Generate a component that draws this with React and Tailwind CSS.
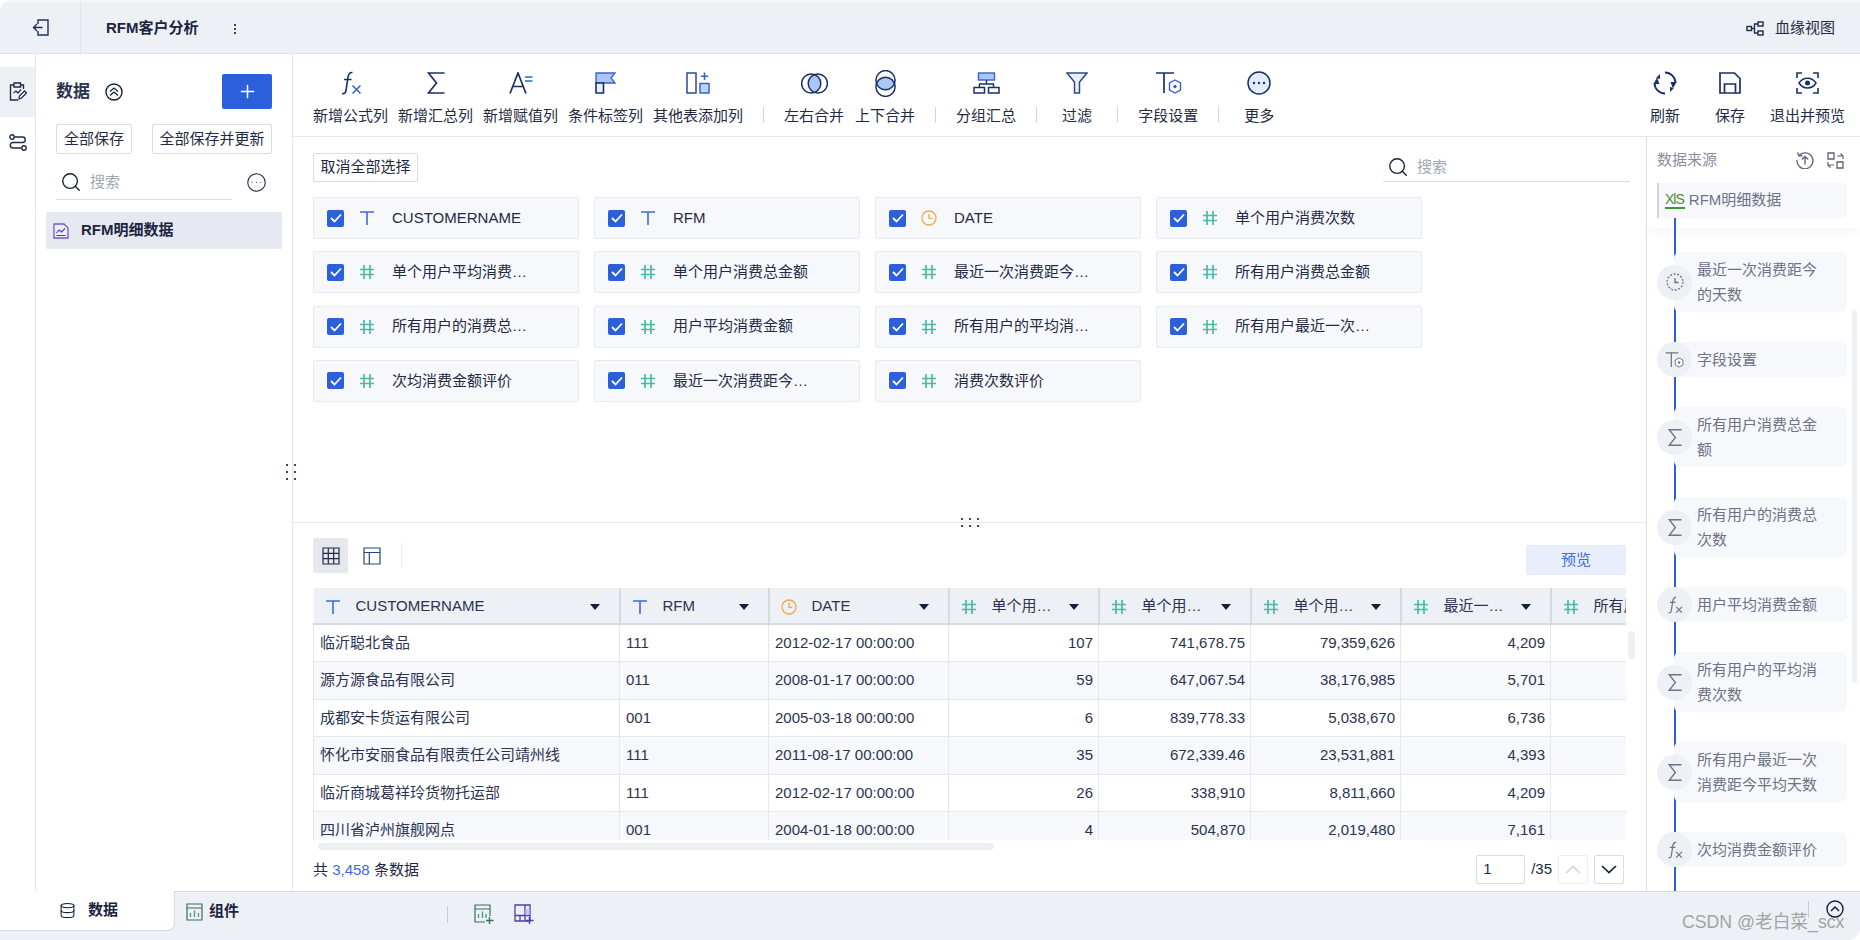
import React from "react";
import { Search, CircleEllipsis, Plus, Database } from "lucide-react";

const NAVY = "#1b3068";
const LB = "#a9c6f5";
const BL = "#3a63c8";

const Svg = ({ w, h, vb, children, className = "" }) => (
  <svg width={w} height={h} viewBox={vb} fill="none" className={"shrink-0 " + className}>{children}</svg>
);

const FxIcon = ({ c = NAVY, x = BL, w = 22, h = 24 }) => (
  <Svg w={w} h={h} vb="0 0 22 24">
    <path d="M12.5 1.5C9.5 1 8.6 2.6 8 6L6 19.5C5.5 22.2 4.4 23 2 22.5M4 8.5H11.5" stroke={c} strokeWidth="1.6" />
    <path d="M12.5 14.5L20.5 22.5M20.5 14.5L12.5 22.5" stroke={x} strokeWidth="1.6" />
  </Svg>
);
const SigmaIcon = ({ c = NAVY, w = 18, h = 22 }) => (
  <Svg w={w} h={h} vb="0 0 18 22">
    <path d="M17.5 1H1.5L9.5 11L1.5 21H17.5" stroke={c} strokeWidth="1.7" />
  </Svg>
);
const AssignIcon = () => (
  <Svg w={24} h={22} vb="0 0 24 22">
    <path d="M1 21.5L9 1L17 21.5M3.8 14.5H14.2" stroke={NAVY} strokeWidth="1.7" />
    <path d="M16 5H23.5M16 9H23.5" stroke={BL} strokeWidth="1.6" />
  </Svg>
);
const FlagIcon = () => (
  <Svg w={21} h={22} vb="0 0 21 22">
    <path d="M1 1H20L16 6L20 11H1Z" fill={LB} stroke={BL} strokeWidth="1.3" />
    <path d="M1 11H8.5V21H1Z" fill="#e9f0fc" stroke={NAVY} strokeWidth="1.6" />
  </Svg>
);
const OtherIcon = () => (
  <Svg w={24} h={22} vb="0 0 24 22">
    <rect x="1" y="1" width="9" height="20" stroke="#2c4a9a" strokeWidth="1.5" />
    <rect x="14" y="11.5" width="9" height="9.5" fill="#bcd3f7" stroke={BL} strokeWidth="1.5" />
    <path d="M18.5 0.5V8M14.8 4.3H22.2" stroke={BL} strokeWidth="1.6" />
  </Svg>
);
const VennH = () => (
  <Svg w={27} h={21} vb="0 0 27 21">
    <path d="M13.5 1.5A9.8 9.8 0 0 1 13.5 19.5A9.8 9.8 0 0 1 13.5 1.5" fill={LB} />
    <circle cx="10.2" cy="10.5" r="9.6" stroke={NAVY} strokeWidth="1.5" />
    <circle cx="16.8" cy="10.5" r="9.6" stroke={NAVY} strokeWidth="1.5" />
  </Svg>
);
const VennV = () => (
  <Svg w={21} h={27} vb="0 0 21 27">
    <path d="M1.5 13.5A9.8 9.8 0 0 1 19.5 13.5A9.8 9.8 0 0 1 1.5 13.5" fill={LB} />
    <circle cx="10.5" cy="10.2" r="9.6" stroke={NAVY} strokeWidth="1.5" />
    <circle cx="10.5" cy="16.8" r="9.6" stroke={NAVY} strokeWidth="1.5" />
  </Svg>
);
const OrgIcon = () => (
  <Svg w={27} h={22} vb="0 0 27 22">
    <rect x="5.5" y="1" width="16" height="7" fill={LB} stroke={BL} strokeWidth="1.4" />
    <path d="M13.5 8V12M6.5 15.5V12H20.5V15.5" stroke={NAVY} strokeWidth="1.4" />
    <rect x="1" y="15.5" width="10.5" height="5.5" fill="#fff" stroke={NAVY} strokeWidth="1.5" />
    <rect x="15.5" y="15.5" width="10.5" height="5.5" fill="#fff" stroke={NAVY} strokeWidth="1.5" />
  </Svg>
);
const FunnelIcon = () => (
  <Svg w={22} h={22} vb="0 0 22 22">
    <path d="M1 1H21L13.5 10V21H8.5V10Z" fill="#eaf0fb" stroke="#2c4a85" strokeWidth="1.5" />
  </Svg>
);
const THexIcon = ({ c = NAVY, h2 = BL, w = 27, h = 22 }) => (
  <Svg w={w} h={h} vb="0 0 27 22">
    <path d="M1 1H19M9 1V21" stroke={c} strokeWidth="1.7" />
    <path d="M20 8L25.5 11V18L20 21L14.5 18V11Z" fill="#fff" stroke={h2} strokeWidth="1.4" />
    <circle cx="20" cy="14.5" r="1.7" fill={h2} />
  </Svg>
);
const MoreIcon = () => (
  <Svg w={24} h={24} vb="0 0 24 24">
    <circle cx="12" cy="12" r="11" fill="#e3ecfb" stroke={NAVY} strokeWidth="1.5" />
    <circle cx="7" cy="12" r="1.2" fill={NAVY} /><circle cx="12" cy="12" r="1.2" fill={NAVY} /><circle cx="17" cy="12" r="1.2" fill={NAVY} />
  </Svg>
);
const RefreshIcon = () => (
  <Svg w={24} h={24} vb="0 0 24 24">
    <path d="M12 1.5A10.5 10.5 0 0 1 22.5 12" stroke={NAVY} strokeWidth="1.9" />
    <path d="M12 22.5A10.5 10.5 0 0 1 1.5 12" stroke={NAVY} strokeWidth="1.9" />
    <path d="M17.5 11H23.5L20 17.5Z M17 16V21L21 17Z" fill={NAVY} />
    <path d="M6.5 13H0.5L4 6.5Z M7 8V3L3 7Z" fill={NAVY} />
  </Svg>
);
const SaveIcon = () => (
  <Svg w={22} h={22} vb="0 0 22 22">
    <path d="M1 1H15.5L21 6.5V21H1Z" stroke={NAVY} strokeWidth="1.7" />
    <path d="M5.5 21V12H16.5V21" stroke={NAVY} strokeWidth="1.7" />
  </Svg>
);
const EyeScan = () => (
  <Svg w={23} h={22} vb="0 0 23 22">
    <path d="M1 6V1H6M17 1H22V6M1 16V21H6M17 21H22V16" stroke={NAVY} strokeWidth="1.6" />
    <path d="M3 11C7 4.5 16 4.5 20 11C16 17.5 7 17.5 3 11Z" stroke={NAVY} strokeWidth="1.5" />
    <circle cx="11.5" cy="11" r="2.5" fill={NAVY} />
  </Svg>
);
const BackIcon = () => (
  <Svg w={17} h={17} vb="0 0 17 17">
    <path d="M6 5V1H16V16H6V12" stroke={NAVY} strokeWidth="1.4" />
    <path d="M10.5 8.5H1.5M5 5L1.5 8.5L5 12" stroke={NAVY} strokeWidth="1.4" />
  </Svg>
);
const Lineage = () => (
  <Svg w={18} h={15} vb="0 0 18 15">
    <rect x="1" y="5.5" width="4.5" height="4" stroke="#1f2a44" strokeWidth="1.4" />
    <rect x="12" y="1" width="5" height="4" stroke="#1f2a44" strokeWidth="1.4" />
    <rect x="12" y="10" width="5" height="4" stroke="#1f2a44" strokeWidth="1.4" />
    <path d="M5.5 7.5H8.5M12 3H8.5V12H12" stroke="#1f2a44" strokeWidth="1.3" />
  </Svg>
);
const ClipEdit = () => (
  <Svg w={18} h={19} vb="0 0 18 19">
    <path d="M5 3H1.5V18H9M12 3H14.5V7" stroke="#1f2a44" strokeWidth="1.4" />
    <path d="M5 1H11.5V5H5Z" stroke="#1f2a44" strokeWidth="1.4" />
    <path d="M4.5 11L7 9L9 11L12 7.5" stroke="#1f2a44" strokeWidth="1.2" />
    <path d="M10 17L10.5 14L15.5 9L17.5 11L12.5 16Z" fill="#fff" stroke="#1f2a44" strokeWidth="1.3" />
  </Svg>
);
const RouteIcon = () => (
  <Svg w={18} h={17} vb="0 0 18 17">
    <circle cx="3" cy="3" r="2.2" stroke="#1f2a44" strokeWidth="1.4" />
    <circle cx="15" cy="14" r="2.2" stroke="#1f2a44" strokeWidth="1.4" />
    <path d="M5.5 3H13.5A2.7 2.7 0 0 1 13.5 8.5H4A2.7 2.7 0 0 0 4 14H12.5" stroke="#1f2a44" strokeWidth="1.4" />
  </Svg>
);
const ChevCircle = ({ double, s = 18 }) => (
  <Svg w={s} h={s} vb="0 0 18 18">
    <circle cx="9" cy="9" r="8" stroke="#14213d" strokeWidth="1.4" />
    {double ? <path d="M5 8.5L9 5L13 8.5M5 12.5L9 9L13 12.5" stroke="#14213d" strokeWidth="1.3" /> : <path d="M5 11L9 7L13 11" stroke="#14213d" strokeWidth="1.5" />}
  </Svg>
);
const ChartDoc = () => (
  <Svg w={16} h={16} vb="0 0 16 16">
    <path d="M1 1H11L15 5V15H1Z" fill="#f0eefb" stroke="#6a5acd" strokeWidth="1.3" />
    <path d="M3.5 10L6 7L8.5 9L12 5.5M3.5 12.5H12.5" stroke="#4b3fb0" strokeWidth="1.1" />
  </Svg>
);
const TIcon = () => (
  <Svg w={14} h={14} vb="0 0 14 14">
    <path d="M0 1H14M7 1V14" stroke="#3f6ae0" strokeWidth="1.6" />
  </Svg>
);
const HashIcon = () => (
  <Svg w={14} h={14} vb="0 0 14 14">
    <path d="M4 0V14M10 0V14M0 4.5H14M0 9.5H14" stroke="#4cb8a8" strokeWidth="1.7" />
  </Svg>
);
const ClockIcon = () => (
  <Svg w={16} h={16} vb="0 0 16 16">
    <circle cx="8" cy="8" r="7" stroke="#f0a94a" strokeWidth="1.3" />
    <path d="M8 3.8V8.3H11.5" stroke="#f0a94a" strokeWidth="1.3" />
  </Svg>
);
const Check = () => (
  <span className="w-[17px] h-[17px] shrink-0 rounded-[2px] bg-[#2c5fdc] flex items-center justify-center">
    <Svg w={12} h={10} vb="0 0 12 10"><path d="M1 5L4.5 8.5L11 1.5" stroke="#fff" strokeWidth="1.8" /></Svg>
  </span>
);
const TypeIcon = ({ t }) => (t === "T" ? <TIcon /> : t === "D" ? <ClockIcon /> : <HashIcon />);

const Tool = ({ label, icon, className = "" }) => (
  <div className={"flex flex-col items-center shrink-0 " + className}>
    <div className="h-[30px] flex items-center justify-center">{icon}</div>
    <div className="mt-[7px] text-[15px] leading-[22px] text-[#1f2a44] whitespace-nowrap">{label}</div>
  </div>
);
const Sep = () => <div className="w-px h-[15px] bg-[#cfd3dd] shrink-0 mx-[20px] mt-[39px]" />;

const fields = [
  ["T", "CUSTOMERNAME"], ["T", "RFM"], ["D", "DATE"], ["H", "单个用户消费次数"],
  ["H", "单个用户平均消费…"], ["H", "单个用户消费总金额"], ["H", "最近一次消费距今…"], ["H", "所有用户消费总金额"],
  ["H", "所有用户的消费总…"], ["H", "用户平均消费金额"], ["H", "所有用户的平均消…"], ["H", "所有用户最近一次…"],
  ["H", "次均消费金额评价"], ["H", "最近一次消费距今…"], ["H", "消费次数评价"],
];

const cols = [
  ["T", "CUSTOMERNAME", 306], ["T", "RFM", 149], ["D", "DATE", 180], ["H", "单个用…", 150],
  ["H", "单个用…", 152], ["H", "单个用…", 150], ["H", "最近一…", 150], ["H", "所有用…", 150],
];
const rows = [
  ["临沂聪北食品", "111", "2012-02-17 00:00:00", "107", "741,678.75", "79,359,626", "4,209"],
  ["源方源食品有限公司", "011", "2008-01-17 00:00:00", "59", "647,067.54", "38,176,985", "5,701"],
  ["成都安卡货运有限公司", "001", "2005-03-18 00:00:00", "6", "839,778.33", "5,038,670", "6,736"],
  ["怀化市安丽食品有限责任公司靖州线", "111", "2011-08-17 00:00:00", "35", "672,339.46", "23,531,881", "4,393"],
  ["临沂商城葛祥玲货物托运部", "111", "2012-02-17 00:00:00", "26", "338,910", "8,811,660", "4,209"],
  ["四川省泸州旗舰网点", "001", "2004-01-18 00:00:00", "4", "504,870", "2,019,480", "7,161"],
];

const G = "#6b7386";
const steps = [
  [<Svg w={18} h={18} vb="0 0 18 18"><circle cx="9" cy="9" r="8" stroke={G} strokeWidth="1.3" strokeDasharray="2 1.6" /><path d="M9 5V9.5H12.5" stroke={G} strokeWidth="1.3" /></Svg>, "最近一次消费距今的天数"],
  [<THexIcon c={G} h2={G} w={19} h={16} />, "字段设置"],
  [<SigmaIcon c={G} w={14} h={17} />, "所有用户消费总金额"],
  [<SigmaIcon c={G} w={14} h={17} />, "所有用户的消费总次数"],
  [<FxIcon c={G} x={G} w={16} h={18} />, "用户平均消费金额"],
  [<SigmaIcon c={G} w={14} h={17} />, "所有用户的平均消费次数"],
  [<SigmaIcon c={G} w={14} h={17} />, "所有用户最近一次消费距今平均天数"],
  [<FxIcon c={G} x={G} w={16} h={18} />, "次均消费金额评价"],
];

const Dots = ({ className }) => (
  <div className={"absolute z-20 grid gap-x-[6px] gap-y-[5px] " + className}>
    {[0, 1, 2, 3, 4, 5].map((i) => <span key={i} className="w-[2px] h-[2px] bg-[#3b4560]" />)}
  </div>
);

export default function App() {
  return (
    <div
      className="relative w-[1860px] h-[940px] flex flex-col overflow-hidden bg-white text-[15px] text-[#1f2a44] rounded-tl-[12px] rounded-br-[12px]"
      style={{ fontFamily: '"Liberation Sans", "Noto Sans CJK SC", sans-serif' }}
    >
      {/* top bar */}
      <div className="h-[54px] shrink-0 bg-[#edf0f5] border-b border-[#e2e5ec] border-t-2 border-t-[#f6f6f6] flex items-center">
        <div className="w-[81px] h-full border-r border-[#e2e5ec] flex items-center pl-[32px]"><BackIcon /></div>
        <div className="ml-[25px] font-bold text-[15px] text-[#1b2541] pt-[2px]">RFM客户分析</div>
        <div className="ml-[35px] flex flex-col gap-[2px] pt-[2px]">
          {[0, 1, 2].map((i) => <span key={i} className="w-[2px] h-[2px] bg-[#3b4560]" />)}
        </div>
        <div className="ml-auto mr-[25px] flex items-center gap-[11px] pt-[2px]">
          <Lineage /><span className="text-[#1f2a44]">血缘视图</span>
        </div>
      </div>

      <div className="flex-1 flex min-h-0">
        {/* rail */}
        <div className="w-[36px] shrink-0 border-r border-[#e4e7ee] pt-[13px]">
          <div className="h-[50px] bg-[#edf0f5] flex items-center justify-center pb-[2px]"><ClipEdit /></div>
          <div className="h-[50px] flex items-center justify-center"><RouteIcon /></div>
        </div>

        {/* data panel */}
        <div className="w-[257px] shrink-0 border-r border-[#e4e7ee] px-[20px] pt-[20px]">
          <div className="flex items-center h-[35px]">
            <span className="font-bold text-[17px] text-[#2a3350]">数据</span>
            <span className="ml-[15px]"><ChevCircle double /></span>
            <button className="ml-auto w-[50px] h-[35px] rounded-[2px] bg-[#2c5fdc] flex items-center justify-center">
              <Plus size={21} color="#fff" strokeWidth={1.7} />
            </button>
          </div>
          <div className="mt-[15px] flex gap-[20px]">
            <div className="w-[76px] h-[30px] border border-[#d9dce5] rounded-[2px] flex items-center justify-center">全部保存</div>
            <div className="w-[120px] h-[30px] border border-[#d9dce5] rounded-[2px] flex items-center justify-center">全部保存并更新</div>
          </div>
          <div className="mt-[11px] flex items-center h-[35px]">
            <div className="w-[176px] h-full border-b border-[#d9dce5] flex items-center pl-[4px]">
              <Search size={22} color="#14213d" strokeWidth={1.5} />
              <span className="ml-[8px] text-[#a3a7b3]">搜索</span>
            </div>
            <CircleEllipsis size={21} color="#14213d" strokeWidth={1.2} className="ml-[14px]" />
          </div>
          <div className="mt-[12px] -mx-[10px] h-[37px] bg-[#e6e9f1] flex items-center pl-[7px]">
            <ChartDoc />
            <span className="ml-[12px] font-bold text-[#1b2541]">RFM明细数据</span>
          </div>
        </div>

        {/* main */}
        <div className="flex-1 flex flex-col min-w-0">
          <div className="h-[83px] shrink-0 border-b border-[#e4e7ee] flex items-start pl-[20px] pr-[15px] pt-[14px]">
            <div className="flex gap-[10px]">
              <Tool label="新增公式列" icon={<FxIcon />} />
              <Tool label="新增汇总列" icon={<SigmaIcon />} />
              <Tool label="新增赋值列" icon={<AssignIcon />} />
              <Tool label="条件标签列" icon={<FlagIcon />} />
              <Tool label="其他表添加列" icon={<OtherIcon />} />
            </div>
            <Sep />
            <div className="flex gap-[11px]">
              <Tool label="左右合并" icon={<VennH />} />
              <Tool label="上下合并" icon={<VennV />} />
            </div>
            <Sep />
            <Tool label="分组汇总" icon={<OrgIcon />} />
            <Sep />
            <Tool label="过滤" icon={<FunnelIcon />} className="w-[40px]" />
            <Sep />
            <Tool label="字段设置" icon={<THexIcon />} />
            <Sep />
            <Tool label="更多" icon={<MoreIcon />} className="w-[40px]" />
            <div className="ml-auto flex">
              <Tool label="刷新" icon={<RefreshIcon />} className="mr-[35px]" />
              <Tool label="保存" icon={<SaveIcon />} className="mr-[25px]" />
              <Tool label="退出并预览" icon={<EyeScan />} />
            </div>
          </div>

          <div className="flex-1 flex min-h-0">
            {/* center */}
            <div className="relative flex-1 min-w-0 flex flex-col">
              <Dots className="grid-cols-2 -left-[7px] top-[327px]" />
              <Dots className="grid-cols-3 left-[668px] top-[381px]" />
              <div className="h-[386px] shrink-0 border-b border-[#e4e7ee] px-[20px] pt-[16px]">
                <div className="flex items-start justify-between">
                  <div className="w-[105px] h-[29px] border border-[#d9dce5] rounded-[2px] flex items-center justify-center">取消全部选择</div>
                  <div className="w-[247px] h-[29px] border-b border-[#d9dce5] flex items-center pl-[4px] mr-[-4px]">
                    <Search size={22} color="#14213d" strokeWidth={1.5} />
                    <span className="ml-[8px] text-[#a3a7b3]">搜索</span>
                  </div>
                </div>
                <div className="mt-[15px] grid grid-cols-[266px_266px_266px_266px] gap-x-[15px] gap-y-[12.3px]">
                  {fields.map(([t, l], i) => (
                    <div key={i} className="h-[42px] border border-[#e6e9f0] bg-[#f7f8fc] rounded-[2px] flex items-center pl-[13px]">
                      <Check />
                      <span className="w-[16px] ml-[15px] flex justify-center"><TypeIcon t={t} /></span>
                      <span className="ml-[17px] whitespace-nowrap text-[#1f2a44]">{l}</span>
                    </div>
                  ))}
                </div>
              </div>

              <div className="flex-1 min-h-0 px-[20px] pt-[15px]">
                <div className="flex items-start h-[35px]">
                  <div className="w-[35px] h-[35px] rounded-[2px] bg-[#e6e8ee] flex items-center justify-center">
                    <Svg w={18} h={18} vb="0 0 18 18"><path d="M1 1H17V17H1ZM1 6.3H17M1 11.7H17M6.3 1V17M11.7 1V17" stroke="#1f2a44" strokeWidth="1.2" /></Svg>
                  </div>
                  <div className="w-[35px] h-[35px] flex items-center justify-center ml-[6px]">
                    <Svg w={18} h={18} vb="0 0 18 18"><path d="M1 1H17V17H1ZM1 5.5H17M6.3 5.5V17" stroke="#1f4a7a" strokeWidth="1.2" /></Svg>
                  </div>
                  <div className="w-px h-[25px] bg-[#eceef2] ml-[12px] mt-[5px]" />
                  <div className="ml-auto mt-[7px] w-[100px] h-[30px] rounded-[2px] bg-[#e8eefb] text-[#3f6ae0] flex items-center justify-center">预览</div>
                </div>

                <div className="mt-[15px] w-[1313px] h-[252px] overflow-hidden">
                  <table className="table-fixed border-collapse w-[1387px]">
                    <colgroup>{cols.map((c, i) => <col key={i} style={{ width: c[2] }} />)}</colgroup>
                    <thead>
                      <tr className="h-[36px] bg-[#edf0f5]">
                        {cols.map(([t, l], i) => (
                          <th key={i} className="p-0 font-normal border-r-2 border-b-2 border-[#d5d9e3]">
                            <div className="flex items-center pl-[12px] pr-[19px] pt-[2px] text-[#2b3350]">
                              <span className="w-[15px] flex justify-center"><TypeIcon t={t} /></span>
                              <span className="ml-[15px] whitespace-nowrap">{l}</span>
                              <span className="ml-auto w-0 h-0 border-l-[5px] border-r-[5px] border-t-[6px] border-l-transparent border-r-transparent border-t-[#14213d]" />
                            </div>
                          </th>
                        ))}
                      </tr>
                    </thead>
                    <tbody>
                      {rows.map((r, i) => (
                        <tr key={i} className={"h-[37.5px] " + (i % 2 ? "bg-[#f7f8fc]" : "bg-white")}>
                          {cols.map((c, j) => (
                            <td key={j} className={"p-0 border-b border-r border-[#e4e7ee] text-[#2b3350] whitespace-nowrap " + (j === 0 ? "border-l " : "") + (j < 3 ? "pl-[6px]" : "text-right pr-[5px]")}>
                              {r[j] || ""}
                            </td>
                          ))}
                        </tr>
                      ))}
                    </tbody>
                  </table>
                </div>
                <div className="mt-[3px] ml-[5px] w-[676px] h-[7px] rounded-full bg-[#eff0f2]" />
                <div className="mt-[5px] h-[29px] flex items-center">
                  <span className="pt-[2px]">共 <span className="text-[#3f6ae0]">3,458</span> 条数据</span>
                  <div className="ml-auto w-[49px] h-[29px] border border-[#d9dce5] rounded-[2px] flex items-center pl-[6px]">1</div>
                  <span className="ml-[6px]">/35</span>
                  <div className="ml-[6px] w-[30px] h-[29px] border border-[#eceef2] rounded-[2px] flex items-center justify-center">
                    <Svg w={16} h={9} vb="0 0 16 9"><path d="M1 8L8 1.5L15 8" stroke="#cfd3dd" strokeWidth="1.6" /></Svg>
                  </div>
                  <div className="ml-[6px] mr-[2px] w-[30px] h-[29px] border border-[#d9dce5] rounded-[2px] flex items-center justify-center">
                    <Svg w={16} h={9} vb="0 0 16 9"><path d="M1 1L8 7.5L15 1" stroke="#14213d" strokeWidth="1.7" /></Svg>
                  </div>
                </div>
              </div>
            </div>

            {/* right panel */}
            <div className="relative w-[214px] shrink-0 border-l border-[#d9dce5] overflow-hidden">
              <div className="h-[91px] pl-[10px] pr-[13px] pt-[10px] shadow-[0_6px_10px_rgba(0,0,0,0.03)]">
                <div className="flex items-center h-[26px]">
                  <span className="text-[#8a8f9c]">数据来源</span>
                  <span className="ml-auto"><Svg w={18} h={18} vb="0 0 18 18"><path d="M3 4.5A8 8 0 1 1 1 9" stroke="#5b6274" strokeWidth="1.3" /><path d="M1.5 1.5L3 5L6.5 4.5" stroke="#5b6274" strokeWidth="1.3" /><path d="M9 13.5V5.5M5.8 8.5L9 5.5L12.2 8.5" stroke="#5b6274" strokeWidth="1.3" /></Svg></span>
                  <span className="ml-[13px] mr-[3px]"><Svg w={17} h={17} vb="0 0 17 17"><path d="M1 1H7V7H1ZM10 10H16V16H10Z" stroke="#5b6274" strokeWidth="1.3" /><path d="M10 4H16V7M13.5 1.5L16 4M7 13H1V10M3.5 15.5L1 13" stroke="#5b6274" strokeWidth="1.2" /></Svg></span>
                </div>
                <div className="mt-[10px] h-[35px] bg-[#f7f8fc] border-l-2 border-[#cfd3dd] rounded-r-[4px] flex items-center pl-[6px]">
                  <span className="text-[14px] leading-[15px] tracking-[-1px] text-[#4a8f2c] border-b-2 border-[#3d9a33] pr-[1px]">XlS</span>
                  <span className="ml-[4px] text-[#6b7386]">RFM明细数据</span>
                </div>
              </div>
              <div className="absolute left-[27px] top-[81px] bottom-0 w-[1.5px] bg-[#2c5fdc]" />
              <div className="relative z-10 pl-[10px] pr-[13px] pt-[24px] flex flex-col gap-[30px]">
                {steps.map(([ic, t], i) => (
                  <div key={i} className="flex items-center">
                    <div className="relative z-10 w-[35px] h-[35px] rounded-full bg-[#edf0f5] flex items-center justify-center shrink-0">{ic}</div>
                    <div className="-ml-[18px] flex-1 bg-[#f7f8fc] rounded-[6px] pl-[23px] py-[5px]">
                      <div className="w-[125px] text-[15px] leading-[25px] text-[#6b7386]">{t}</div>
                    </div>
                  </div>
                ))}
              </div>
              <div className="absolute right-[3px] top-[173px] w-[5px] h-[373px] rounded-full bg-[#eef0f3]" />
            </div>
          </div>
        </div>
      </div>

      {/* vertical scrollbar of the table */}
      <div className="absolute left-[1628px] top-[631px] w-[7px] h-[28px] rounded-full bg-[#eff0f2]" />

      {/* bottom bar */}
      <div className="h-[49px] shrink-0 bg-[#edf0f5] border-t border-[#d5d9e3] flex items-start">
        <div className="-mt-px w-[175px] h-[40px] bg-white border-r border-b border-[#d5d9e3] rounded-br-[8px] flex items-center pl-[59px] gap-[12px]">
          <Database size={17} color="#14213d" strokeWidth={1.5} />
          <span className="font-bold text-[#1b2541]">数据</span>
        </div>
        <div className="h-[39px] flex items-center pl-[11px] gap-[6px]">
          <Svg w={17} h={18} vb="0 0 17 18"><path d="M1 1H16V17H1ZM1 5H16" stroke="#3d6b6b" strokeWidth="1.2" /><path d="M4.5 14V10M8.5 14V7.5M12.5 14V10" stroke="#4c9a8f" strokeWidth="1.3" /></Svg>
          <span className="font-bold text-[#1b2541]">组件</span>
        </div>
        <div className="ml-[208px] mt-[14px] w-px h-[17px] bg-[#c8ccd6]" />
        <div className="ml-[26px] mt-[12px]"><Svg w={20} h={21} vb="0 0 20 21"><path d="M16 12V1H1V18H11M1 5H16" stroke="#3d6b6b" strokeWidth="1.2" /><path d="M4.5 14V10M8.5 14V7.5M12 14V10" stroke="#4c9a8f" strokeWidth="1.3" /><path d="M15.5 13V20M12 16.5H19.5" stroke="#3d6b6b" strokeWidth="1.4" /></Svg></div>
        <div className="ml-[20px] mt-[12px]"><Svg w={20} h={21} vb="0 0 20 21"><path d="M1 1H16V17H1ZM1 11.5H16M11 1V17M6 11.5V17" stroke="#4b3fb0" strokeWidth="1.3" /><path d="M11.5 5H15.5V11H11.5Z" fill="#c9c4ea" /><path d="M15.5 13V20M12 16.5H19.5" stroke="#4b3fb0" strokeWidth="1.4" /></Svg></div>
        <div className="ml-auto mt-[8px] mr-[16px] flex items-center gap-[17px]">
          <div className="w-px h-[17px] bg-[#c8ccd6]" />
          <ChevCircle />
        </div>
      </div>

      {/* watermark */}
      <div className="absolute left-[1682px] top-[909px] text-[17.7px] leading-[26px] text-[#8e8e8e]/80 whitespace-nowrap">CSDN @老白菜_scx</div>
    </div>
  );
}
